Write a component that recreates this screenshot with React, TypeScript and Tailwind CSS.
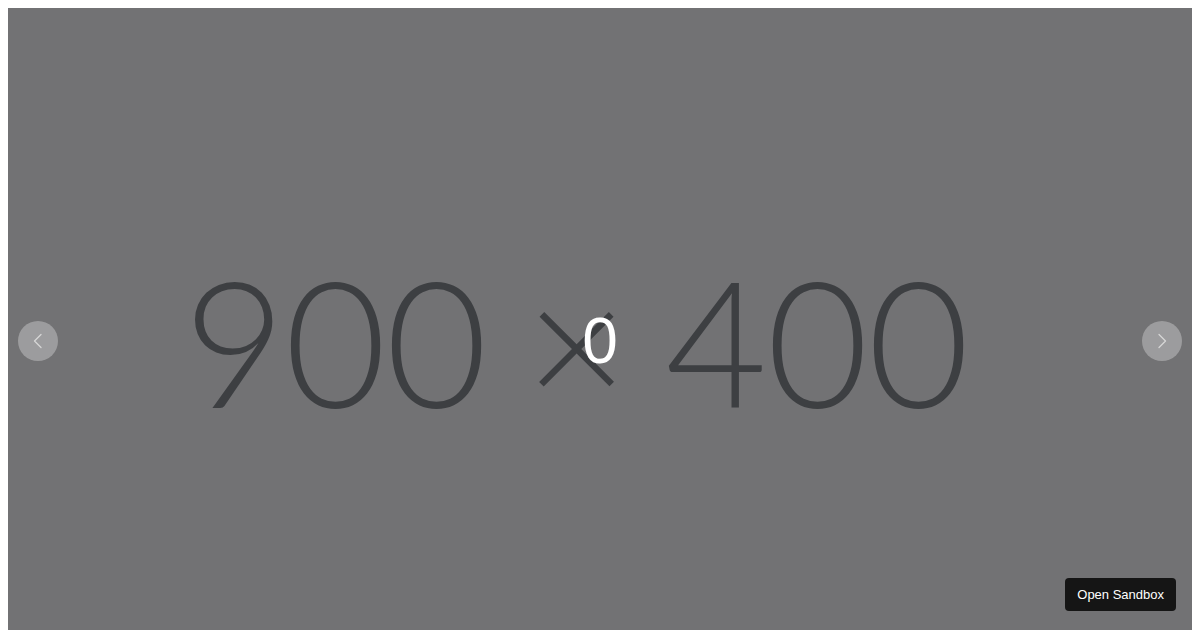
import { useState } from "react";

function Chevron({ dir }: { dir: "left" | "right" }) {
  return (
    <svg width="16" height="16" viewBox="0 0 16 16" fill="none" aria-hidden>
      <path
        d={dir === "left" ? "M11 1.5 4.5 8l6.5 6.5" : "M5 1.5 11.5 8 5 14.5"}
        stroke="#d6d6d6"
        strokeWidth="1.3"
        strokeLinecap="round"
        strokeLinejoin="round"
      />
    </svg>
  );
}

export default function App() {
  const [index, setIndex] = useState(0);
  const total = 3;

  return (
    <div className="h-[630px] overflow-hidden bg-white p-2 font-['Liberation_Sans',Arial,sans-serif]">
      <div className="grid h-[666px] w-full bg-[#727274]">
        <div className="[grid-area:1/1] flex items-center justify-center pr-12 pb-[2px]">
          <span className="select-none whitespace-pre font-['Lato',sans-serif] text-[176px] font-light leading-none tracking-[-1px] [word-spacing:-8px] text-[#3d3f42]">
            900 × 400
          </span>
        </div>

        <div className="[grid-area:1/1] flex items-center justify-between px-[10px]">
          <button
            onClick={() => setIndex((index + total - 1) % total)}
            className="flex h-10 w-10 items-center justify-center rounded-full bg-white/30"
          >
            <Chevron dir="left" />
          </button>
          <span className="text-[64px] leading-none text-white">{index}</span>
          <button
            onClick={() => setIndex((index + 1) % total)}
            className="flex h-10 w-10 items-center justify-center rounded-full bg-white/30"
          >
            <Chevron dir="right" />
          </button>
        </div>
      </div>

      <a
        href="#"
        className="fixed bottom-[19px] right-[24px] rounded-[4px] bg-[#151515] px-[12px] py-[8px] text-[13px] leading-[17px] text-white"
      >
        Open Sandbox
      </a>
    </div>
  );
}
